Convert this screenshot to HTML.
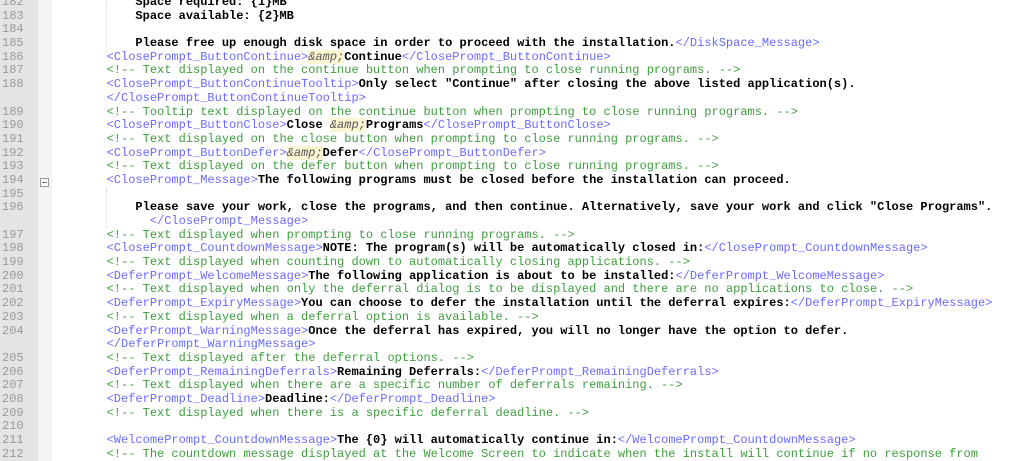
<!DOCTYPE html>
<html><head><meta charset="utf-8"><style>
body{margin:0;width:1024px;height:461px;overflow:hidden;background:#fff;position:relative;font-family:"Liberation Mono",monospace;font-size:12px}
#g{position:absolute;left:0;top:0;width:38px;height:461px;background:#e4e4e4}
#f{position:absolute;left:38px;top:0;width:14px;height:461px;background:#f3f3f3}
#c{position:absolute;left:0;top:-4px}
.r{height:13.7px;line-height:13.7px;white-space:pre;position:relative}
.n{position:absolute;left:2px;width:28px;text-align:left;color:#9a9a9a;font-size:12px}
.t{position:absolute;left:49px}
.g1{color:#6a6aff}.cm{color:#3e9e3e}.b{font-weight:bold;color:#000}
.e{font-style:italic;background:#fdf6d3;color:#555;font-weight:normal}
.fold{position:absolute;left:40px;top:178px;width:7px;height:7px;border:1px solid #999;background:#fff}
.fold:after{content:"";position:absolute;left:1px;top:3px;width:5px;height:1px;background:#777}
.ig{position:absolute;width:0;border-left:1px dotted #d8d8d8}
</style></head><body>
<div id="g"></div><div id="f"></div><div class="fold"></div>
<div class="ig" style="left:106px;top:0;height:52px"></div>
<div class="ig" style="left:106px;top:188px;height:40px"></div>
<div id="c">
<div class="r"><span class="n">182</span><span class="t b">            Space required: {1}MB</span></div>
<div class="r"><span class="n">183</span><span class="t b">            Space available: {2}MB</span></div>
<div class="r"><span class="n">184</span></div>
<div class="r"><span class="n">185</span><span class="t"><span class="b">            Please free up enough disk space in order to proceed with the installation.</span><span class="g1">&lt;/DiskSpace_Message&gt;</span></span></div>
<div class="r"><span class="n">186</span><span class="t"><span class="g1">        &lt;ClosePrompt_ButtonContinue&gt;</span><span class="e">&amp;amp;</span><span class="b">Continue</span><span class="g1">&lt;/ClosePrompt_ButtonContinue&gt;</span></span></div>
<div class="r"><span class="n">187</span><span class="t cm">        &lt;!-- Text displayed on the continue button when prompting to close running programs. --&gt;</span></div>
<div class="r"><span class="n">188</span><span class="t"><span class="g1">        &lt;ClosePrompt_ButtonContinueTooltip&gt;</span><span class="b">Only select "Continue" after closing the above listed application(s).</span></span></div>
<div class="r"><span class="t g1">        &lt;/ClosePrompt_ButtonContinueTooltip&gt;</span></div>
<div class="r"><span class="n">189</span><span class="t cm">        &lt;!-- Tooltip text displayed on the continue button when prompting to close running programs. --&gt;</span></div>
<div class="r"><span class="n">190</span><span class="t"><span class="g1">        &lt;ClosePrompt_ButtonClose&gt;</span><span class="b">Close </span><span class="e">&amp;amp;</span><span class="b">Programs</span><span class="g1">&lt;/ClosePrompt_ButtonClose&gt;</span></span></div>
<div class="r"><span class="n">191</span><span class="t cm">        &lt;!-- Text displayed on the close button when prompting to close running programs. --&gt;</span></div>
<div class="r"><span class="n">192</span><span class="t"><span class="g1">        &lt;ClosePrompt_ButtonDefer&gt;</span><span class="e">&amp;amp;</span><span class="b">Defer</span><span class="g1">&lt;/ClosePrompt_ButtonDefer&gt;</span></span></div>
<div class="r"><span class="n">193</span><span class="t cm">        &lt;!-- Text displayed on the defer button when prompting to close running programs. --&gt;</span></div>
<div class="r"><span class="n">194</span><span class="t"><span class="g1">        &lt;ClosePrompt_Message&gt;</span><span class="b">The following programs must be closed before the installation can proceed.</span></span></div>
<div class="r"><span class="n">195</span></div>
<div class="r"><span class="n">196</span><span class="t b">            Please save your work, close the programs, and then continue. Alternatively, save your work and click "Close Programs".</span></div>
<div class="r"><span class="t g1">              &lt;/ClosePrompt_Message&gt;</span></div>
<div class="r"><span class="n">197</span><span class="t cm">        &lt;!-- Text displayed when prompting to close running programs. --&gt;</span></div>
<div class="r"><span class="n">198</span><span class="t"><span class="g1">        &lt;ClosePrompt_CountdownMessage&gt;</span><span class="b">NOTE: The program(s) will be automatically closed in:</span><span class="g1">&lt;/ClosePrompt_CountdownMessage&gt;</span></span></div>
<div class="r"><span class="n">199</span><span class="t cm">        &lt;!-- Text displayed when counting down to automatically closing applications. --&gt;</span></div>
<div class="r"><span class="n">200</span><span class="t"><span class="g1">        &lt;DeferPrompt_WelcomeMessage&gt;</span><span class="b">The following application is about to be installed:</span><span class="g1">&lt;/DeferPrompt_WelcomeMessage&gt;</span></span></div>
<div class="r"><span class="n">201</span><span class="t cm">        &lt;!-- Text displayed when only the deferral dialog is to be displayed and there are no applications to close. --&gt;</span></div>
<div class="r"><span class="n">202</span><span class="t"><span class="g1">        &lt;DeferPrompt_ExpiryMessage&gt;</span><span class="b">You can choose to defer the installation until the deferral expires:</span><span class="g1">&lt;/DeferPrompt_ExpiryMessage&gt;</span></span></div>
<div class="r"><span class="n">203</span><span class="t cm">        &lt;!-- Text displayed when a deferral option is available. --&gt;</span></div>
<div class="r"><span class="n">204</span><span class="t"><span class="g1">        &lt;DeferPrompt_WarningMessage&gt;</span><span class="b">Once the deferral has expired, you will no longer have the option to defer.</span></span></div>
<div class="r"><span class="t g1">        &lt;/DeferPrompt_WarningMessage&gt;</span></div>
<div class="r"><span class="n">205</span><span class="t cm">        &lt;!-- Text displayed after the deferral options. --&gt;</span></div>
<div class="r"><span class="n">206</span><span class="t"><span class="g1">        &lt;DeferPrompt_RemainingDeferrals&gt;</span><span class="b">Remaining Deferrals:</span><span class="g1">&lt;/DeferPrompt_RemainingDeferrals&gt;</span></span></div>
<div class="r"><span class="n">207</span><span class="t cm">        &lt;!-- Text displayed when there are a specific number of deferrals remaining. --&gt;</span></div>
<div class="r"><span class="n">208</span><span class="t"><span class="g1">        &lt;DeferPrompt_Deadline&gt;</span><span class="b">Deadline:</span><span class="g1">&lt;/DeferPrompt_Deadline&gt;</span></span></div>
<div class="r"><span class="n">209</span><span class="t cm">        &lt;!-- Text displayed when there is a specific deferral deadline. --&gt;</span></div>
<div class="r"><span class="n">210</span></div>
<div class="r"><span class="n">211</span><span class="t"><span class="g1">        &lt;WelcomePrompt_CountdownMessage&gt;</span><span class="b">The {0} will automatically continue in:</span><span class="g1">&lt;/WelcomePrompt_CountdownMessage&gt;</span></span></div>
<div class="r"><span class="n">212</span><span class="t cm">        &lt;!-- The countdown message displayed at the Welcome Screen to indicate when the install will continue if no response from</span></div>
</div>
</body></html>
